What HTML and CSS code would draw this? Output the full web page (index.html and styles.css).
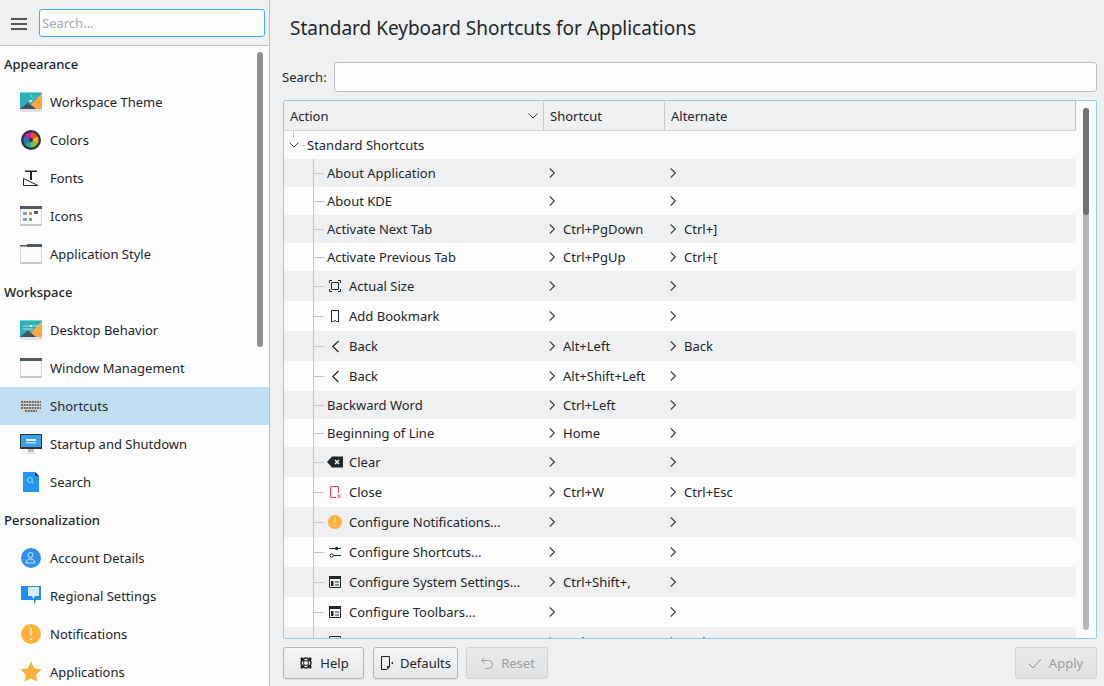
FILE: index.html
```html
<!DOCTYPE html>
<html lang="en">
<head>
<meta charset="utf-8">
<title>Standard Keyboard Shortcuts for Applications</title>
<link rel="stylesheet" href="styles.css">
</head>
<body>
<svg class="defs" width="0" height="0" aria-hidden="true">
  <symbol id="chev" viewBox="0 0 7 10"><path d="M.8.500 5.300 5 .8 9.500" fill="none" stroke="#3f4448" stroke-width="1.200"/></symbol>
  <symbol id="back" viewBox="0 0 16 16"><path d="M11.500 3 5.800 8.500l5.700 5.500" fill="none" stroke="#232629" stroke-width="1.200"/></symbol>
  <symbol id="cfg" viewBox="0 0 16 16"><path d="M2.500 2.500h11v11h-11z" fill="none" stroke="#232629"/><path d="M2 2h12v3H2zM4 7h2.500v5H4zM8 7.500h4v1H8zM8 10.500h4v1H8z" fill="#232629"/></symbol>
  <symbol id="wall" viewBox="0 0 22 20"><rect width="22" height="20" fill="#e0e3e6"/><rect width="22" height="17" fill="#2fb0b8"/><rect width="22" height="1" fill="#6fdccb"/><path d="M22 1v16H7z" fill="#fca63d"/><path d="M0 17 8 10.500 16 17z" fill="#45535c"/><rect y="17" width="22" height="3" fill="#dfe2e5"/></symbol>
  <symbol id="win" viewBox="0 0 22 20"><rect y="0" width="22" height="20" fill="#fbfbfb"/><rect y="0" width="22" height="3" fill="#4f5a62"/><rect y="18" width="22" height="2" fill="#c5c9cd"/><path d="M.5 3v15M21.500 3v15" stroke="#d5d8da"/></symbol>
</svg>
<div class="app">
  <aside class="side">
    <header class="side-head">
      <svg class="burger" width="16" height="12" viewBox="0 0 16 12"><path d="M0 1h16M0 6h16M0 11h16" stroke="#232629" stroke-width="1.700"/></svg>
      <div class="side-search">Search...</div>
    </header>
    <div class="side-list">
      <span class="side-bar"></span>
      <div class="cat">Appearance</div>
      <div class="item"><svg class="ico" viewBox="0 0 22 20"><use href="#wall"/><path d="M11 3l1 1-1 1zM13 5l1 1-1 1zM9 8h4l-3 3z" fill="#eaf6f6"/></svg>Workspace Theme</div>
      <div class="item"><svg class="ico" viewBox="0 0 22 22"><circle cx="11" cy="11" r="10" fill="#31363b"/><path d="M11 11 11 3.500A7.500 7.500 0 0 1 17.500 7.250z" fill="#ef4a2e"/><path d="M11 11 17.500 7.250A7.500 7.500 0 0 1 17.500 14.750z" fill="#f5b318"/><path d="M11 11 17.500 14.750A7.500 7.500 0 0 1 11 18.500z" fill="#7cc63e"/><path d="M11 11 11 18.500A7.500 7.500 0 0 1 4.500 14.750z" fill="#22a88a"/><path d="M11 11 4.500 14.750A7.500 7.500 0 0 1 4.500 7.250z" fill="#2f6fd0"/><path d="M11 11 4.500 7.250A7.500 7.500 0 0 1 11 3.500z" fill="#c8229a"/><circle cx="11" cy="11" r="2" fill="#31363b"/></svg>Colors</div>
      <div class="item"><svg class="ico" viewBox="0 0 22 22"><path d="M5 3.500h12V5h-5v8h-2V5H5z" fill="#232629"/><path d="M3.500 11.500v7h14.500L3.500 11.500z" fill="none" stroke="#232629"/></svg>Fonts</div>
      <div class="item"><svg class="ico" viewBox="0 0 22 20"><use href="#win"/><rect x="3" y="6" width="4" height="3" fill="#6fa8dc"/><rect x="9" y="6" width="3" height="3" fill="#f67e3c"/><rect x="14" y="5" width="4" height="3" fill="#4f5a62"/><rect x="3" y="12" width="4" height="3" fill="#6fa8dc"/><rect x="9" y="12" width="3" height="3" fill="#6cbd45"/></svg>Icons</div>
      <div class="item"><svg class="ico" viewBox="0 0 22 20"><use href="#win"/><rect width="7" height="1" y="2" fill="#6fb5e0"/><rect width="7" height="1" y="0" fill="#fbfbfb"/></svg>Application Style</div>
      <div class="cat">Workspace</div>
      <div class="item"><svg class="ico" viewBox="0 0 22 20"><use href="#wall"/><path d="M3 6h16M3 9h10" stroke="#d5eef0" stroke-width=".8"/><circle cx="11" cy="6" r="1.200" fill="#fff"/></svg>Desktop Behavior</div>
      <div class="item"><svg class="ico" viewBox="0 0 22 20"><use href="#win"/></svg>Window Management</div>
      <div class="item active"><svg class="ico" viewBox="0 0 22 20"><rect y="3" width="22" height="14" fill="#d2d5d6"/><path d="M1 6h20M1 9h20M1 12h20M5 15h12" stroke="#696e71" stroke-width="2" stroke-dasharray="2 .7"/></svg>Shortcuts</div>
      <div class="item"><svg class="ico" viewBox="0 0 22 20"><rect width="22" height="15" fill="#2f343a"/><rect x="1" y="1" width="20" height="12" fill="#3aa0e6"/><rect x="6" y="5" width="10" height="2" fill="#e9f2f7"/><rect x="6" y="8" width="10" height="1.500" fill="#bcd8ea"/><path d="M8 15h6v3H8z" fill="#b9bdc0"/><path d="M7 18.500h8v1H7z" fill="#d0d3d5"/></svg>Startup and Shutdown</div>
      <div class="item"><svg class="ico" viewBox="0 0 22 22"><path d="M3 1h12l4 4v16H3z" fill="#2196f3"/><path d="M15 1l4 4h-4z" fill="#232629"/><circle cx="10" cy="9" r="2.500" fill="none" stroke="#9fd4fa"/><path d="M12 11l2 2" stroke="#9fd4fa"/></svg>Search</div>
      <div class="cat">Personalization</div>
      <div class="item"><svg class="ico" viewBox="0 0 22 22"><circle cx="11" cy="11" r="10" fill="#2e90ef"/><circle cx="10.500" cy="8" r="2.500" fill="none" stroke="#cfe6fb"/><path d="M6 16c0-3 2-4 4.500-4s3.500 1 4 2v2z" fill="none" stroke="#cfe6fb"/></svg>Account Details</div>
      <div class="item"><svg class="ico" viewBox="0 0 22 22"><path d="M1 1h20v14h-5l-2 5v-5H1z" fill="#1e8ff0"/><path d="M8 2h11v9h-4l-2 3-1-3H8z" fill="#d8ecfb"/></svg>Regional Settings</div>
      <div class="item"><svg class="ico" viewBox="0 0 22 22"><circle cx="11" cy="11" r="10" fill="#fdb23f"/><path d="M10 5h2l-.3 8h-1.400zM10 15h2v2h-2z" fill="#ffe3b0"/></svg>Notifications</div>
      <div class="item"><svg class="ico" viewBox="0 0 22 22"><path d="M11 .500l3.200 6.800 7.300 1-5.300 5.100 1.300 7.300L11 17.200l-6.500 3.500 1.300-7.300L.5 8.300l7.300-1z" fill="#fcaf3e"/></svg>Applications</div>
    </div>
  </aside>
  <main class="main">
    <h1 class="title">Standard Keyboard Shortcuts for Applications</h1>
    <div class="search-row"><label class="search-label">Search:</label><div class="search-input"></div></div>
    <section class="frame">
      <div class="vbar"><span class="vthumb"></span></div>
      <div class="thead">
        <div class="th c1">Action<svg class="sort" width="10" height="6" viewBox="0 0 10 6"><path d="M.5.500 5 5 9.500.5" fill="none" stroke="#3f4448"/></svg></div>
        <div class="th c2">Shortcut</div>
        <div class="th c3">Alternate</div>
      </div>
      <div class="tbody">
        <div class="tr h28 root">
          <span class="stub"></span>
          <svg class="root-chev" width="10" height="6" viewBox="0 0 10 6"><path d="M.5.500 5 5 9.500.5" fill="none" stroke="#3f4448"/></svg>
          <span class="stub2"></span>
          <span class="root-label">Standard Shortcuts</span>
        </div>
        <div class="tr h28 alt"><div class="c1 leaf">About Application</div><div class="c2"><svg class="ch"><use href="#chev"/></svg></div><div class="c3"><svg class="ch"><use href="#chev"/></svg></div></div>
        <div class="tr h28"><div class="c1 leaf">About KDE</div><div class="c2"><svg class="ch"><use href="#chev"/></svg></div><div class="c3"><svg class="ch"><use href="#chev"/></svg></div></div>
        <div class="tr h28 alt"><div class="c1 leaf">Activate Next Tab</div><div class="c2"><svg class="ch"><use href="#chev"/></svg>Ctrl+PgDown</div><div class="c3"><svg class="ch"><use href="#chev"/></svg>Ctrl+]</div></div>
        <div class="tr h28"><div class="c1 leaf">Activate Previous Tab</div><div class="c2"><svg class="ch"><use href="#chev"/></svg>Ctrl+PgUp</div><div class="c3"><svg class="ch"><use href="#chev"/></svg>Ctrl+[</div></div>
        <div class="tr h30 alt"><div class="c1 leaf"><svg class="ai" viewBox="0 0 16 16"><path d="M4.500 4.500h7v7h-7z" fill="none" stroke="#232629"/><path d="M2.500 5V2.500H5M11 2.500h2.500V5M13.500 11v2.500H11M5 13.500H2.500V11" fill="none" stroke="#232629"/></svg>Actual Size</div><div class="c2"><svg class="ch"><use href="#chev"/></svg></div><div class="c3"><svg class="ch"><use href="#chev"/></svg></div></div>
        <div class="tr h30"><div class="c1 leaf"><svg class="ai" viewBox="0 0 16 16"><path d="M4.500 14V2.500h7V14" fill="none" stroke="#232629"/><path d="M4 13.500h2.500l1.500-1 1.500 1H12" fill="none" stroke="#232629"/></svg>Add Bookmark</div><div class="c2"><svg class="ch"><use href="#chev"/></svg></div><div class="c3"><svg class="ch"><use href="#chev"/></svg></div></div>
        <div class="tr h30 alt"><div class="c1 leaf"><svg class="ai"><use href="#back"/></svg>Back</div><div class="c2"><svg class="ch"><use href="#chev"/></svg>Alt+Left</div><div class="c3"><svg class="ch"><use href="#chev"/></svg>Back</div></div>
        <div class="tr h30"><div class="c1 leaf"><svg class="ai"><use href="#back"/></svg>Back</div><div class="c2"><svg class="ch"><use href="#chev"/></svg>Alt+Shift+Left</div><div class="c3"><svg class="ch"><use href="#chev"/></svg></div></div>
        <div class="tr h28 alt"><div class="c1 leaf">Backward Word</div><div class="c2"><svg class="ch"><use href="#chev"/></svg>Ctrl+Left</div><div class="c3"><svg class="ch"><use href="#chev"/></svg></div></div>
        <div class="tr h28"><div class="c1 leaf">Beginning of Line</div><div class="c2"><svg class="ch"><use href="#chev"/></svg>Home</div><div class="c3"><svg class="ch"><use href="#chev"/></svg></div></div>
        <div class="tr h30 alt"><div class="c1 leaf"><svg class="ai" viewBox="0 0 16 16"><path d="M5 2.500h11v11H5L0 8z" fill="#232629"/><path d="M8 6l4 4M12 6l-4 4" stroke="#eff0f1" stroke-width="1.500"/></svg>Clear</div><div class="c2"><svg class="ch"><use href="#chev"/></svg></div><div class="c3"><svg class="ch"><use href="#chev"/></svg></div></div>
        <div class="tr h30"><div class="c1 leaf"><svg class="ai" viewBox="0 0 16 16"><path d="M9 13.500H3.500v-11h8V9" fill="none" stroke="#da4453"/><path d="M10.500 10.500l3.500 3.500M14 10.500 10.500 14" stroke="#da4453"/></svg>Close</div><div class="c2"><svg class="ch"><use href="#chev"/></svg>Ctrl+W</div><div class="c3"><svg class="ch"><use href="#chev"/></svg>Ctrl+Esc</div></div>
        <div class="tr h30 alt"><div class="c1 leaf"><svg class="ai" viewBox="0 0 16 16"><circle cx="8" cy="8" r="7" fill="#fdb23f"/><path d="M7.300 3.500h1.400l-.2 6h-1zM7.300 11h1.400v1.500H7.300z" fill="#ffe3b0"/></svg>Configure Notifications...</div><div class="c2"><svg class="ch"><use href="#chev"/></svg></div><div class="c3"><svg class="ch"><use href="#chev"/></svg></div></div>
        <div class="tr h30"><div class="c1 leaf"><svg class="ai" viewBox="0 0 16 16"><path d="M2 4.500h12M6 11.500h8" stroke="#232629"/><circle cx="9.700" cy="4.500" r="1.700" fill="#232629"/><circle cx="4.700" cy="11.500" r="1.700" fill="#fcfcfc" stroke="#232629"/></svg>Configure Shortcuts...</div><div class="c2"><svg class="ch"><use href="#chev"/></svg></div><div class="c3"><svg class="ch"><use href="#chev"/></svg></div></div>
        <div class="tr h30 alt"><div class="c1 leaf"><svg class="ai"><use href="#cfg"/></svg>Configure System Settings...</div><div class="c2"><svg class="ch"><use href="#chev"/></svg>Ctrl+Shift+,</div><div class="c3"><svg class="ch"><use href="#chev"/></svg></div></div>
        <div class="tr h30"><div class="c1 leaf"><svg class="ai"><use href="#cfg"/></svg>Configure Toolbars...</div><div class="c2"><svg class="ch"><use href="#chev"/></svg></div><div class="c3"><svg class="ch"><use href="#chev"/></svg></div></div>
        <div class="tr h30 alt"><div class="c1 leaf"><svg class="ai" viewBox="0 0 16 16"><path d="M2.500 2.500h11v11h-11z" fill="none" stroke="#232629"/></svg>Copy</div><div class="c2"><svg class="ch"><use href="#chev"/></svg>Ctrl+C</div><div class="c3"><svg class="ch"><use href="#chev"/></svg>Ctrl+Ins</div></div>
      </div>
    </section>
    <footer class="foot">
      <button class="btn w81"><svg class="bi" viewBox="0 0 16 16"><circle cx="8" cy="8" r="5" fill="none" stroke="#232629" stroke-width="1.500"/><circle cx="8" cy="8" r="2.500" fill="none" stroke="#232629"/><path d="M3 3l3 3M13 3l-3 3M3 13l3-3M13 13l-3-3" stroke="#232629" stroke-width="2.500"/></svg>Help</button>
      <button class="btn w85 nudge"><svg class="bi" viewBox="0 0 16 16"><path d="M9 14.500H3.500v-13h8V12z" fill="none" stroke="#232629"/><path d="M9 14l3-3H9z" fill="#232629"/><path d="M15 6.500 13 8l2 1.500z" fill="#232629"/></svg>Defaults</button>
      <button class="btn w82 off"><svg class="bi" viewBox="0 0 16 16"><path d="M3 5.500h6.500a4 4 0 0 1 0 8H6M5.500 2.500l-3 3 3 3" fill="none" stroke="#9a9c9e"/></svg>Reset</button>
      <button class="btn w82 off push nudge"><svg class="bi" viewBox="0 0 16 16"><path d="M2 9l4 4 8-9" fill="none" stroke="#8c8e90"/></svg>Apply</button>
    </footer>
  </main>
</div>
</body>
</html>
```

FILE: styles.css
```css
* { box-sizing: border-box; }
html, body { margin: 0; height: 100%; }
body { font: 13px/18px "Noto Sans", sans-serif; color: #232629; background: #eff0f1; overflow: hidden; }
.defs { position: absolute; }
.app { display: flex; height: 686px; }

.side { width: 270px; flex: none; border-right: 1px solid #bcbebf; background: #fcfcfc; display: flex; flex-direction: column; overflow: hidden; }
.side-head { height: 45px; flex: none; background: #eff0f1; box-shadow: 0 1px 0 #bcbebf; display: flex; align-items: center; padding: 0 4px 0 11px; position: relative; z-index: 1; }
.burger { flex: none; margin: 2px 12px 0 0; }
.side-search { flex: 1; height: 28px; border: 1px solid #3daee9; border-radius: 3px; background: #fcfcfc; color: #a8aaac; padding: 4px 2px; }
.side-list { flex: 1; position: relative; overflow: hidden; }
.side-bar { position: absolute; left: 257px; top: 7px; width: 6px; height: 295px; border-radius: 3px; background: #8f9091; }
.cat { height: 38px; line-height: 38px; padding-left: 4px; font-weight: 500; }
.item { height: 38px; display: flex; align-items: center; padding-left: 20px; gap: 8px; }
.item.active { background: #c0dff5; }
.ico { width: 22px; height: 22px; flex: none; }

.main { flex: 1; min-width: 0; padding: 0 7px 0 13px; display: flex; flex-direction: column; }
.title { margin: 0; height: 62px; padding: 16px 0 0 7px; font-size: 19px; line-height: 24px; font-weight: 400; }
.search-row { height: 30px; display: flex; align-items: center; margin-left: -1px; }
.search-label { width: 52px; flex: none; }
.search-input { flex: 1; height: 30px; border: 1px solid #bcbebf; border-radius: 3px; background: #fcfcfc; }

.frame { margin-top: 8px; height: 539px; border: 1px solid #93cee9; border-radius: 2px; background: #fcfcfc; position: relative; overflow: hidden; flex: none; }
.vbar { position: absolute; left: 799px; top: 7px; width: 6px; height: 522px; border-radius: 3px; background: #b5b6b7; }
.vthumb { display: block; height: 107px; border-radius: 3px; background: #707172; }
.thead { display: flex; height: 30px; width: 792px; background: #eff0f1; border-bottom: 1px solid #d2d4d5; border-right: 1px solid #bcbebf; }
.th { line-height: 30px; padding-left: 6px; position: relative; }
.thead .c1 { width: 260px; border-right: 1px solid #c8cacb; }
.thead .c2 { width: 121px; border-right: 1px solid #c8cacb; }
.sort { position: absolute; right: 5px; top: 12px; }

.tbody { width: 792px; }
.tr { display: flex; align-items: center; position: relative; }
.h28 { height: 28px; }
.h30 { height: 30px; }
.alt { background: #eff0f1; }
.tr > .c1 { width: 260px; flex: none; padding-left: 43px; display: flex; align-items: center; align-self: stretch; position: relative; }
.tr > .c2 { width: 121px; flex: none; display: flex; align-items: center; padding-left: 5px; }
.tr > .c3 { flex: 1; display: flex; align-items: center; padding-left: 5px; }
.leaf::before { content: ""; position: absolute; left: 29px; top: 0; bottom: 0; width: 1px; background: #c4c6c7; }
.leaf::after { content: ""; position: absolute; left: 30px; top: 50%; width: 10px; height: 1px; background: #c4c6c7; }
.ch { width: 7px; height: 10px; margin-right: 7px; flex: none; }
.ai { width: 16px; height: 16px; flex: none; margin: 0 6px 0 0; }
.stub { position: absolute; left: 9px; top: 0; width: 1px; height: 6px; background: #c4c6c7; }
.stub2 { position: absolute; left: 17px; top: 14px; width: 4px; height: 1px; background: #c4c6c7; }
.root-chev { position: absolute; left: 5px; top: 11px; }
.root-label { padding-left: 23px; }

.foot { flex: 1; display: flex; gap: 9px; padding-top: 8px; align-items: flex-start; }
.btn { height: 32px; padding: 0; font: inherit; color: #232629; border: 1px solid #b4b6b8; border-radius: 3px; background: linear-gradient(#f5f6f6, #e6e7e8); box-shadow: 0 1px 1px rgba(0,0,0,.08); display: flex; align-items: center; justify-content: center; gap: 6px; }
.w81 { width: 81px; }
.w85 { width: 85px; }
.w82 { width: 82px; margin-left: -1px; }
.nudge { padding-right: 2px; }
.off { color: #9a9c9e; border-color: #cfd1d2; background: linear-gradient(#eaebec, #e0e1e2); box-shadow: none; }
.push { margin-left: auto; }
.bi { width: 16px; height: 16px; flex: none; }
```
